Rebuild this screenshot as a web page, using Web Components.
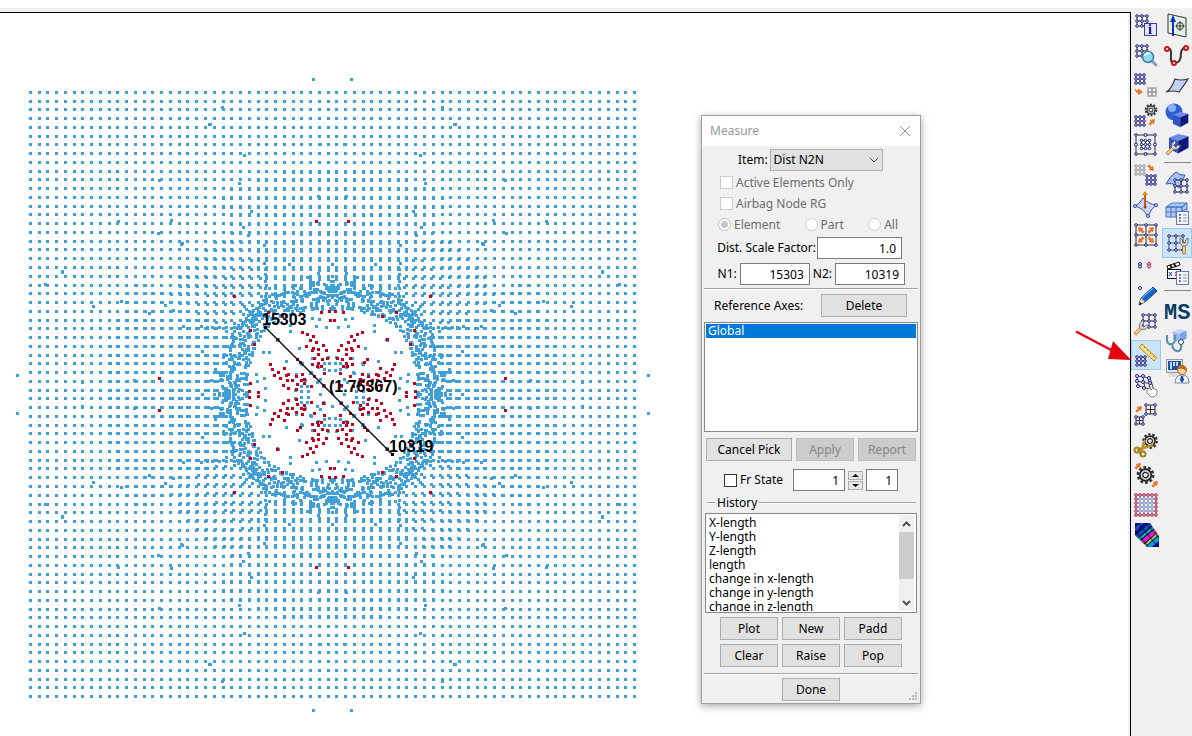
<!DOCTYPE html>
<html lang="en">
<head>
<meta charset="utf-8">
<title>Post-processor - Measure</title>
<style>
html, body { margin: 0; height: 100%; background: #fff; }
body { font: 12px/16px "Noto Sans", "Open Sans", sans-serif; color: #000; }
</style>
</head>
<body>
<app-shell>
  <node-scene></node-scene>
  <float-window caption="Measure"><measure-form></measure-form></float-window>
  <tool-palette slot="tools"></tool-palette>
</app-shell>

<script>
function define(name, html, setup) {
  customElements.define(name, class extends HTMLElement {
    connectedCallback() {
      if (this.shadowRoot) return;
      const root = this.attachShadow({ mode: "open" });
      const t = document.createElement("template");
      t.innerHTML = typeof html === "function" ? html(this) : html;
      root.append(t.content.cloneNode(true));
      if (setup) setup(root, this);
    }
  });
}

/* ---------- page frame ---------- */
define("app-shell", `
<style>
:host { display: flex; flex-direction: column; min-height: 100vh; box-sizing: border-box; padding-top: 8px; }
.main { flex: 1; display: flex; background: #f0f0f0; padding-top: 4px; }
.view { flex: 1; min-width: 0; position: relative; overflow: hidden; background: #fff; border-top: 1px solid #000; border-right: 2px solid #f0f0f0; }
.side { position: relative; flex: none; border-left: 1px solid #000; margin-top: -4px; display: flex; }
.side::before { content: ""; position: absolute; left: -3px; top: 0; width: 3px; height: 4px; background: #f0f0f0; }
.side::after { content: ""; position: absolute; left: -3px; top: 4px; width: 2px; height: 1px; background: #000; }
.arrow { position: absolute; right: 59px; top: 321px; pointer-events: none; }
</style>
<div class="main">
  <div class="view"><slot></slot></div>
  <div class="side"><slot name="tools"></slot>
    <svg class="arrow" width="58" height="34" viewBox="0 0 58 34" aria-hidden="true">
      <path d="M1 2.500L40 23" stroke="#e60012" stroke-width="2.500"/><path d="M38 12L56 31L33 30Z" fill="#e60012"/>
    </svg>
  </div>
</div>`);

/* ---------- node cloud ---------- */
function buildCloud() {
  const blue = [], red = [], CX = 332, CY = 381;
  let seed = 77;
  const rnd = () => (seed = (seed * 16807) % 2147483647) / 2147483647;
  const put = (list, x, y) => list.push("M" + Math.round(CX + x - 1) + " " + Math.round(CY + y - 1) + "h3v3h-3z");
  const mirror = (list, a, b) => {
    const both = Math.abs(a - b) < 1 ? [[a, b]] : [[a, b], [b, a]];
    for (const [x, y] of both) for (const sx of [1, -1]) for (const sy of [1, -1]) put(list, x * sx, y * sy);
  };
  const P = 8.76;
  for (let i = 0; i < 35; i++) for (let j = 0; j <= i; j++) {
    const x = (i + .5) * P, y = (j + .5) * P, r = Math.hypot(x, y);
    if (r < 111) continue;
    mirror(blue, x, y);
    /* second mesh, pulled slightly towards the hole */
    const near = y / x < .6;
    const k = r < 128 ? 3 : r < 165 ? 2 : r < (near ? 230 : 195) ? 1 : 0;
    if (k) mirror(blue, x - k, y - (near ? 0 : k));
  }
  /* refined mesh round the hole */
  for (let n = 0; n < 182; n++) {
    const t = Math.pow(rnd(), 1.25) * Math.PI / 4, inner = 84 + 9 * t / .785;
    const r = inner + rnd() * (29 - 4 * t);
    mirror(blue, r * Math.cos(t), r * Math.sin(t));
  }
  for (let d = 73; d < 90; d += 2.5) mirror(blue, d + .4, d - .4);
  for (let d = 0; d < 24; d += 4) mirror(blue, 84 + d * 1.8, 67);
  [[19,315.5],[110,287],[123,270],[88,239],[93,211],[81,183],[173,214],[161,174],[89,167],[84,159],[68,149],[151,150],
   [136,180],[68,131],[43,130],[0,130],[67,125],[122,270],[12,250],[14,198],[33,46],[16,68],[42,63],[42,69],[6,67],
   [20,76],[13,75],[3,31],[8,31],[3,24],[12,15],[8,9],[8,25],[14,27],[4,37],[20,36],[55,54],[30,31],[21,22],[0,12],
   [0,118],[25,117],[14,121]
  ].forEach(p => mirror(blue, p[0], p[1]));
  [[30,62],[25,60],[19,58],[22,54],[26,48],[16,52],[19,46],[9,49],[20,44],[14,45],[6,44],[18,36],[14,40],[14,31],[10,35],
   [5,36],[20,30],[15,28],[11,28],[8,21],[2,74],[3,83],[11,82],[64,82],[50,78],[55,55],[98,98],[16,173],[35,35.5],
   [32,32.5],[18,18.5],[9,9]].forEach(p => mirror(red, p[0], p[1]));
  return `<path fill="#3fa0d8" d="${blue.join("")}"/><path fill="#c00020" d="${red.join("")}"/>`;
}
define("node-scene", () => `
<style>
:host { display: block; }
svg { display: block; }
text { font: bold 16px/16px "Liberation Sans", Arial, sans-serif; fill: #000; }
</style>
<svg width="700" height="720" role="img" aria-label="Node cloud with a measured distance">
  <g shape-rendering="crispEdges">${buildCloud()}</g>
  <path d="M265.500 314.500L392.500 441.500" stroke="#000" stroke-width="1.300"/>
  <rect x="264" y="313" width="3" height="3"/><rect x="391" y="440" width="3" height="3"/>
  <text x="262" y="312">15303</text><text x="329" y="379">(1.76367)</text><text x="389" y="439">10319</text>
</svg>`);

/* ---------- floating window ---------- */
define("float-window", el => `
<style>
:host { position: absolute; left: 701px; top: 102px; width: 220px; box-sizing: border-box; border: 1px solid #a0a0a0; background: #f0f0f0; box-shadow: 0 2px 8px rgba(0,0,0,.35); display: flex; flex-direction: column; }
header { display: flex; align-items: center; justify-content: space-between; height: 30px; background: #fff; padding: 0 8px; color: #999; }
h1 { font: inherit; margin: 0; }
button { border: 0; background: none; padding: 0; width: 14px; height: 14px; display: flex; align-items: center; justify-content: center; }
.grip { position: absolute; right: 2px; bottom: 2px; }
</style>
<header><h1>${el.getAttribute("caption")}</h1>
<button aria-label="Close"><svg width="12" height="12" viewBox="0 0 12 12"><path d="M1 1L11 11M11 1L1 11" stroke="#909090"/></svg></button></header>
<slot></slot>
<svg class="grip" width="9" height="9" viewBox="0 0 9 9" fill="#b8b8b8" aria-hidden="true"><path d="M6 0h2v2h-2zM3 3h2v2h-2zM6 3h2v2h-2zM0 6h2v2h-2zM3 6h2v2h-2zM6 6h2v2h-2z"/></svg>`);

define("push-button", el => `
<style>
:host { display: block; width: 58px; height: 23px; }
:host([size="wide"]) { width: 86px; }
button { width: 100%; height: 100%; box-sizing: border-box; border: 1px solid #adadad; background: #e1e1e1; font: inherit; color: #000; padding: 0; display: block; }
button:disabled { background: #ccc; border-color: #bfbfbf; color: #838383; }
</style>
<button type="button" ${el.hasAttribute("disabled") ? "disabled" : ""}><slot></slot></button>`);

define("pick-box", el => `
<style>
:host { display: block; }
label { display: flex; align-items: center; gap: 3px; color: #000; }
:host([disabled]) label { color: #6d6d6d; }
input { appearance: none; margin: 0; width: 13px; height: 13px; border: 1px solid #333; background: #fff; box-sizing: border-box; }
input:disabled { border-color: #ccc; }
input[type=radio] { border-radius: 50%; }
input[type=radio]:checked { background: radial-gradient(circle, #c4c4c4 0 3px, #fff 4px); border-color: #bcbcbc; }
</style>
<label><input type="${el.getAttribute("kind") || "checkbox"}" ${el.hasAttribute("disabled") ? "disabled" : ""} ${el.hasAttribute("checked") ? "checked" : ""}><slot></slot></label>`);

define("measure-form", `
<style>
:host { display: flex; flex-direction: column; padding: 3px 2px 2px; }
.row { display: flex; align-items: center; }
.r21 { height: 21px; } .r22 { height: 22px; }
input { font: inherit; box-sizing: border-box; height: 22px; border: 1px solid #7a7a7a; background: #fff; padding: 0 5px; margin: 0; text-align: right; min-width: 0; border-radius: 0; }
.w85 { width: 85px; } .w70 { width: 70px; } .w52 { width: 52px; } .w32 { width: 32px; }
.drop { position: relative; width: 113px; }
select { appearance: none; font: inherit; color: #000; width: 100%; height: 22px; border: 1px solid #adadad; background: #e1e1e1; border-radius: 0; padding: 0 3px; display: block; }
.drop svg { position: absolute; right: 4px; top: 8px; pointer-events: none; }
hr { width: 100%; box-sizing: border-box; height: 2px; border: 0; border-top: 1px solid #a0a0a0; background: #fff; margin: 0; }
ul { list-style: none; margin: 0; padding: 1px; background: #fff; border: 1px solid #828790; box-sizing: border-box; line-height: 14px; }
.axes { height: 110px; }
.axes li { background: #0078d7; color: #fff; padding: 0 2px; }
.hist { display: flex; height: 100px; margin: 0 1px; border: 1px solid #828790; box-sizing: border-box; background: #fff; padding: 1px 2px 1px 1px; }
.hist ul { flex: 1; border: 0; padding: 1px 2px; overflow: hidden; }
.bar { width: 15px; background: #f0f0f0; display: flex; flex-direction: column; }
.bar i { height: 47px; background: #cdcdcd; }
.bar button { border: 0; padding: 0; height: 17px; background: none; display: flex; align-items: center; justify-content: center; }
.bar button:last-child { margin-top: auto; }
.spin { display: flex; flex-direction: column; gap: 1px; }
.spin button { width: 15px; height: 9px; padding: 0; border: 1px solid #adadad; background: #e8e8e8; display: flex; align-items: center; justify-content: center; }
.legend { display: flex; align-items: center; gap: 2px; height: 16px; padding: 0 2px 0 3px; }
.legend hr:first-child { width: 8px; } .legend hr:last-child { flex: 1; }
</style>
<div class="row r22" style="padding-left:34px;gap:2px"><label for="item">Item:</label>
  <span class="drop"><select id="item"><option>Dist N2N</option></select>
  <svg width="10" height="6" viewBox="0 0 10 6" aria-hidden="true"><path d="M1 1L5 5L9 1" fill="none" stroke="#444"/></svg></span></div>
<div class="row r21" style="margin-top:1px;padding-left:16px"><pick-box disabled>Active Elements Only</pick-box></div>
<div class="row r21" style="padding-left:16px"><pick-box disabled>Airbag Node RG</pick-box></div>
<div class="row r21" style="padding:0 20px 0 14px;justify-content:space-between"><pick-box kind="radio" disabled checked>Element</pick-box><pick-box kind="radio" disabled>Part</pick-box><pick-box kind="radio" disabled>All</pick-box></div>
<div class="row r22" style="margin-top:2px;padding-right:16px;gap:1px;justify-content:flex-end"><label for="scale">Dist. Scale Factor:</label><input class="w85" id="scale" value="1.0"></div>
<div class="row r22" style="margin-top:4px;padding-right:13px;gap:3px;justify-content:flex-end"><label for="n1">N1:</label><input class="w70" id="n1" value="15303"><label for="n2">N2:</label><input class="w70" id="n2" value="10319"></div>
<hr style="margin-top:3px">
<div class="row" style="margin-top:4px;padding:0 11px 0 10px;justify-content:space-between"><span>Reference Axes:</span><push-button size="wide">Delete</push-button></div>
<ul class="axes" role="listbox" aria-label="Reference Axes" style="margin-top:5px"><li role="option" aria-selected="true">Global</li></ul>
<div class="row" style="margin-top:6px;gap:4px;padding-left:2px"><push-button size="wide">Cancel Pick</push-button><push-button disabled>Apply</push-button><push-button disabled>Report</push-button></div>
<div class="row r22" style="margin-top:8px;padding:0 20px;gap:3px"><pick-box style="flex:1">Fr State</pick-box><input class="w52" aria-label="First state" value="1">
  <span class="spin"><button aria-label="Up"><svg width="7" height="3" viewBox="0 0 7 3"><path d="M0 3L3.500 0L7 3Z"/></svg></button><button aria-label="Down"><svg width="7" height="3" viewBox="0 0 7 3"><path d="M0 0L3.500 3L7 0Z"/></svg></button></span>
  <input class="w32" aria-label="State" value="1"></div>
<div class="legend" style="margin-top:4px"><hr><span>History</span><hr></div>
<div class="hist" style="margin-top:2px"><ul role="listbox" aria-label="History"><li role="option">X-length</li><li role="option">Y-length</li><li role="option">Z-length</li><li role="option">length</li><li role="option">change in x-length</li><li role="option">change in y-length</li><li role="option">change in z-length</li></ul>
  <div class="bar"><button aria-label="Scroll up"><svg width="9" height="6" viewBox="0 0 9 6"><path d="M1 5L4.500 1.500L8 5" fill="none" stroke="#505050" stroke-width="2"/></svg></button><i></i><button aria-label="Scroll down"><svg width="9" height="6" viewBox="0 0 9 6"><path d="M1 1L4.500 4.500L8 1" fill="none" stroke="#505050" stroke-width="2"/></svg></button></div></div>
<div class="row" style="margin-top:4px;gap:4px;justify-content:center"><push-button>Plot</push-button><push-button>New</push-button><push-button>Padd</push-button></div>
<div class="row" style="margin-top:4px;gap:4px;justify-content:center"><push-button>Clear</push-button><push-button>Raise</push-button><push-button>Pop</push-button></div>
<hr style="margin-top:6px">
<div class="row" style="margin-top:3px;justify-content:center"><push-button>Done</push-button></div>`);

/* ---------- tool icons, drawn on a 30 x 30 field ---------- */
function mesh(x, y, c, r, p, o = {}) {
  let lines = "", dots = "";
  for (let i = 0; i < c; i++) lines += `M${x + i * p} ${y}v${(r - 1) * p}`;
  for (let j = 0; j < r; j++) lines += `M${x} ${y + j * p}h${(c - 1) * p}`;
  for (let i = 0; i < c; i++) for (let j = 0; j < r; j++)
    if (!o.skip || !o.skip(i, j)) dots += `<circle cx="${x + i * p}" cy="${y + j * p}" r="${o.r || 1.3}"/>`;
  return `<path d="${lines}" stroke="${o.line || "#333"}" fill="none"/><g fill="#eef1ff" stroke="${o.dot || "#20208c"}">${dots}</g>`;
}
function dots(list, col = "#20208c", r = 1.5) {
  return `<g fill="#e8ecff" stroke="${col}">` + list.map(p => `<circle cx="${p[0]}" cy="${p[1]}" r="${r}"/>`).join("") + "</g>";
}
const gear = (x, y, s) => `<g transform="translate(${x} ${y}) scale(${s})"><circle r="9" fill="none" stroke="#333" stroke-width="3" stroke-dasharray="3.300 2.355"/><circle r="6.800" fill="#c8c8c8" stroke="#222" stroke-width="2"/><circle r="3.200" fill="#f0f0f0" stroke="#222" stroke-width="1.500"/></g>`;
const spark = (x, y, a) => `<g transform="translate(${x} ${y}) rotate(${a})"><path d="M-3.500 1H0V2.500L3.500 0L0 -2.500V-1H-3.500Z" fill="#f57a1a" stroke="#d4521c" stroke-width=".5"/></g>`;
const wrench = (x, y, a) => `<g transform="translate(${x} ${y}) rotate(${a})"><path d="M-1.500 1V10H1.500V1" fill="#f5c48a" stroke="#a66a20" stroke-width=".7"/><path d="M-4 -6V-1L-1.500 2H1.500L4 -1V-6L1.500 -4V-1H-1.500V-4Z" fill="#e4e4e4" stroke="#555" stroke-width=".8"/></g>`;
const cube = (x, y, s) => `<g transform="translate(${x} ${y}) scale(${s})"><path d="M0 3L8 0L17 2L8 6Z" fill="#6d8be8"/><path d="M0 3L8 6V17L0 13Z" fill="#3153c8"/><path d="M8 6L17 2V12L8 17Z" fill="#10187c"/></g>`;
const form = (x, y) => `<g transform="translate(${x} ${y})"><rect x=".5" y=".5" width="12" height="13" fill="#f4f6ff" stroke="#6678b8"/><path d="M3 4h2M3 7h2M3 10h2" stroke="#3a55b0" stroke-width="1.500"/><path d="M7 4h4M7 7h4M7 10h4" stroke="#999"/></g>`;
const I = {
  info: mesh(6, 6, 3, 3, 5) + `<rect x="13.500" y="13.500" width="12" height="12" fill="#e6e8f8" stroke="#3a3a9c"/><text x="17" y="24" font-family="Liberation Serif" font-weight="bold" font-size="14" fill="#10106c">i</text>`,
  find: mesh(6, 6, 3, 3, 5) + `<path d="M20 20L25 25" stroke="#8aa0b8" stroke-width="3" stroke-linecap="round"/><circle cx="17" cy="17" r="5.500" fill="#8fdcf2" stroke="#3f7ea0" stroke-width="1.500"/><path d="M13.500 16A4 4 0 0 1 19 13.500" stroke="#e8fbff" stroke-width="2" fill="none"/>`,
  move: mesh(5, 5, 3, 3, 4) + `<path d="M4 17Q4 21 7 20.500V18.500L12 22L7 25V23Q3 22 4 17Z" fill="#f76b12"/>` + mesh(17, 18, 3, 3, 4, { line: "#777", dot: "#bbb", r: .8, skip: (i, j) => i === 1 || j === 1 }),
  gridgear: mesh(5, 17, 3, 3, 4) + gear(20, 10, .6) + spark(21, 22, -45),
  box: mesh(5, 5, 2, 2, 19) + dots([[14.5, 5], [5, 14.5], [24, 14.5], [14.5, 24]]) + mesh(10.5, 10.5, 3, 3, 4),
  copy: mesh(5, 6, 3, 3, 4, { line: "#aaa", dot: "#999" }) + mesh(16, 16, 3, 3, 4) + spark(20, 8, 45),
  normal: `<path d="M4 16Q9 14 12 8Q17 14 25 15Q20 19 17 26Q12 18 4 16Z" fill="#c9d8fa" stroke="#3b4f9c"/><path d="M14 17V5" stroke="#d45a12" stroke-width="2"/><path d="M11 5H17L14 1Z" fill="#f0861a"/><path d="M14 17h.1" stroke="#a33" stroke-width="3" stroke-linecap="round"/>` + dots([[4, 16], [25, 15], [17, 26]], "#2040b0"),
  burst: mesh(5, 5, 3, 3, 10) + spark(10, 10, -135) + spark(20, 10, -45) + spark(10, 20, 135) + spark(20, 20, 45),
  merge: dots([[9, 14], [9, 16.500]], "#20208c") + dots([[18, 14], [18, 16.500]], "#c01030"),
  pencil: dots([[9, 8]]) + `<path d="M8 25L10 18L22 7L26 11L14 22Z" fill="#1c62c8" stroke="#0c3f94"/><path d="M11 18L22 8" stroke="#58a0f0" stroke-width="1.500"/><path d="M8 25L10 18L14 22Z" fill="#f6d7a2"/><path d="M8 25L9 22L11 24Z" fill="#000"/>`,
  fix: mesh(12, 5, 3, 3, 6) + wrench(11, 17, 45),
  ruler: `<path d="M8 7L11 4L26 18L23 21Z" fill="#f6dc7c" stroke="#b58a20"/><path d="M10 6L24.500 19.500" stroke="#fff2b8"/><path d="M13 8l1-1M16 11l1-1M19 14l1-1M22 17l1-1" stroke="#a98420"/>` + mesh(6, 17, 3, 3, 4),
  grab: `<path d="M6 6L19 8L23 20L7 16Z M6 11L21 14M12 7L14 18M17 8L19 19" fill="none" stroke="#444"/>` + dots([[6, 6], [12, 6], [18, 8], [6, 11], [12, 12], [19, 13], [7, 16], [13, 18]]) + `<path d="M16 20L18 18L20 20L22 18L26 20V24L23 27H20L16 23Z" fill="#fff" stroke="#888"/>`,
  scale: mesh(15, 5, 3, 3, 4.5, { skip: (i, j) => i === 1 || j === 1 }) + mesh(5, 17, 3, 3, 3.5, { skip: (i, j) => i === 1 || j === 1 }) + spark(8, 9, -45),
  cut: gear(19, 11, .75) + `<path d="M14 10L9 25M22 15L6 20" stroke="#b9942c" stroke-width="2.500"/><g fill="none" stroke="#a88422" stroke-width="2"><circle cx="6" cy="20" r="2.500"/><circle cx="12" cy="24" r="2.500"/></g>`,
  gears: gear(14.5, 15, .85) + spark(7, 6, -45) + spark(24, 24, -45),
  fill: mesh(5, 5, 6, 6, 4, { line: "#8890b8", dot: "#8890c0", skip: (i, j) => i === 0 || j === 0 || i === 5 || j === 5 }) + mesh(5, 5, 6, 6, 4, { line: "none", dot: "#b01838", skip: (i, j) => i > 0 && j > 0 && i < 5 && j < 5 }),
  contour: `<clipPath id="c"><path d="M4 3H19L28 16V27H16L4 15Z"/></clipPath><g clip-path="url(#c)"><path d="M0 0H30V30H0Z" fill="#101080"/><path d="M0 14L12 2M2 20L22 2" stroke="#1050c0" stroke-width="3"/><path d="M6 21L24 6" stroke="#00c890" stroke-width="2"/><path d="M9 24L27 9" stroke="#e020b0" stroke-width="4"/><path d="M12 27L29 12" stroke="#a0d030" stroke-width="2"/><path d="M14 30L32 15" stroke="#00a0e0" stroke-width="4"/><path d="M2 8L20 30M8 4L27 27M14 2L30 20" stroke="#000" stroke-width=".8"/></g>`,
  plane: `<path d="M6 4L24 8V27L6 23Z" fill="#e4f4e4" stroke="#333"/><path d="M11 26V10" stroke="#1030c8" stroke-width="2"/><path d="M8 12L11 5L14 12Z" fill="#1030c8"/><circle cx="18" cy="16" r="3.500" fill="none" stroke="#333"/><path d="M18 11V21M13.500 16H22.500" stroke="#333"/>`,
  curve: `<path d="M5 9Q10 7 9 16Q8 24 13 23Q19 23 19 13Q20 7 24 8" fill="none" stroke="#333" stroke-width="2"/><g fill="#fff" stroke="#c81414" stroke-width="2"><circle cx="5" cy="9" r="2"/><circle cx="12" cy="23" r="2"/><circle cx="24" cy="8" r="2"/></g>`,
  surface: `<path d="M4 22Q9 20 13 9Q19 11 26 9Q23 14 17 22Q11 20 4 22Z" fill="#c2d2f4" stroke="#333" stroke-width="1.200"/>`,
  solid: `<circle cx="12" cy="12" r="8.500" fill="#2d5fd0"/><circle cx="10" cy="8" r="4" fill="#9fc0f8" opacity=".8"/>` + cube(11, 12, .9),
  solidfix: cube(7, 4, 1.150) + wrench(12, 17, 45),
  surfmesh: `<path d="M4 16Q8 8 14 4Q18 8 23 7Q20 13 17 20Q11 14 4 16Z" fill="#a8c0f2" stroke="#3450b0"/>` + mesh(13, 12, 3, 3, 6),
  blockform: `<path d="M4 9L10 5H25L20 9ZM4 9H20V19H4ZM20 9L25 5V15L20 19Z" fill="#a9caf6" stroke="#4674c0"/><path d="M4 14H20L25 10M9 9V19M14 9V19" stroke="#4674c0" fill="none"/>` + form(14, 13),
  meshfix: mesh(7, 8, 3, 3, 7, { line: "#555" }) + wrench(22, 16, 0),
  clip: `<path d="M5 8L17 4L18 7L6 11Z" fill="#fff" stroke="#111"/><path d="M8 7l2 3M12 6l2 3" stroke="#111" stroke-width="2"/><rect x="5.500" y="11.500" width="13" height="9" fill="#fff" stroke="#111"/><path d="M7 14l3 4M10 14l-3 4" stroke="#1030c0"/><path d="M13 14l3 4M16 14l-3 4" stroke="#d01020"/>` + form(14, 13),
  ms: `<text x="2" y="23" font-family="Liberation Mono" font-weight="bold" font-size="22" fill="#053c66">MS</text>`,
  check: `<g transform="translate(11 3)">${cube(0, 0, .8).replace("#10187c", "#7d9fe8").replace("#3153c8", "#9db8f2").replace("#6d8be8", "#c8d8fa")}</g><path d="M5 9V15Q6 19 10 18Q14 17 13 9M10 18Q11 26 17 25Q20 23 19 18" fill="none" stroke="#5f93ac" stroke-width="2.200"/><circle cx="19" cy="16" r="2.500" fill="#dff" stroke="#446"/>`,
  user: `<rect x="4.500" y="3.500" width="16" height="13" fill="#ece8dc" stroke="#999"/><rect x="6" y="5" width="13" height="9" fill="#1653b4"/><path d="M9 6V13M12 6v4M15 6v4" stroke="#fff" stroke-width="1.500"/><path d="M6 17H17L19 21H7Z" fill="#ddd"/><circle cx="20" cy="14" r="4.500" fill="#ffd7a0" stroke="#a85c10"/><path d="M15.500 13Q17 8 21 9Q26 11 24 15Q22 12 15.500 13Z" fill="#c26a14"/><path d="M13 27Q13 19 20 19Q27 19 27 27Z" fill="#eef4ff" stroke="#789"/><path d="M19 20H21L22 24L20 27L18 24Z" fill="#2344b0"/>`
};
define("tool-button", el => `
<style>
:host { display: block; width: 30px; height: 30px; }
button { width: 30px; height: 30px; padding: 0; border: 0; background: none; display: block; }
:host([active]) button { background: #cce4f7; box-shadow: inset 0 0 0 1px #99c9ef; }
svg { display: block; }
</style>
<button type="button" aria-label="${el.getAttribute("icon")}"><svg width="30" height="30" viewBox="0 0 30 30">${I[el.getAttribute("icon")]}</svg></button>`);

const tool = n => n === "-" ? "<hr>" : `<tool-button icon="${n}"${n === "ruler" || n === "meshfix" ? " active" : ""}></tool-button>`;
define("tool-palette", `
<style>
:host { display: flex; gap: 1px; padding-top: 2px; background: #f0f0f0; }
div { width: 30px; }
hr { width: 27px; height: 1px; border: 0; background: #888; margin: 2px 0 5px 2px; }
</style>
<div>${"info find move gridgear box copy normal burst merge pencil fix ruler grab scale cut gears fill contour".split(" ").map(tool).join("")}</div>
<div>${"plane curve surface solid solidfix - surfmesh blockform meshfix clip - ms check user".split(" ").map(tool).join("")}</div>`);
</script>
</body>
</html>
